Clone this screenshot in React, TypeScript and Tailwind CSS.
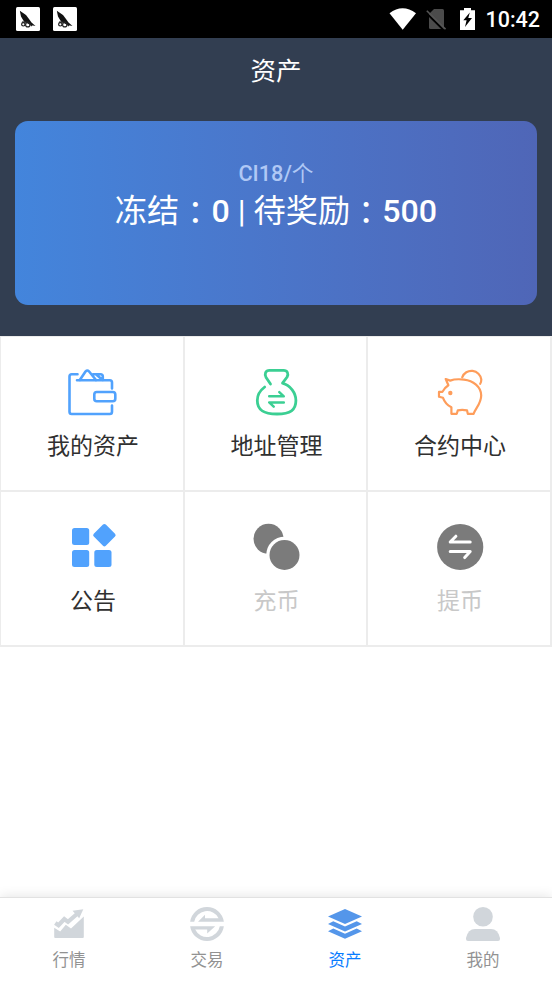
import type { ReactNode } from 'react';
import clsx from 'clsx';

interface Tile {
  label: string;
  icon: ReactNode;
  disabled?: boolean;
}

interface Tab {
  label: string;
  icon: ReactNode;
  active?: boolean;
}

function TileIcon({ children, className }: { children: ReactNode; className: string }) {
  return (
    <svg width="50" height="48" viewBox="0 0 50 48" className={className} strokeLinecap="round" strokeLinejoin="round">
      {children}
    </svg>
  );
}

function TabIcon({ children }: { children: ReactNode }) {
  return (
    <svg width="34" height="34" viewBox="0 0 34 34" fill="currentColor">
      {children}
    </svg>
  );
}

const tiles: Tile[] = [
  {
    label: '我的资产',
    icon: (
      <TileIcon className="fill-none stroke-[#51a2fd] stroke-[2.6]">
        <path d="M9.5 6.3H3.7Q1.5 6.3 1.5 8.5V43.8Q1.5 46 3.7 46H41.8Q44 46 44 43.8V37.5" />
        <path d="M9 12.2H41.8Q44 12.2 44 14.4V20.5" />
        <path d="M11.8 12L17.7 3.3Q19.3 1.6 20.9 3.3L28 12M25 6.3H32.5Q34.8 6.3 34.8 8.5V12M28.5 6.8L34 11.5" />
        <rect x="26.3" y="24" width="21" height="9.3" rx="2.5" />
      </TileIcon>
    ),
  },
  {
    label: '地址管理',
    icon: (
      <TileIcon className="fill-none stroke-[#3bcf93] stroke-[2.8]">
        <path d="M18.5 16L14.1 9.5C12.2 6 13.5 2.4 17.5 2.4H31.5C35.5 2.4 36.8 5.8 35.1 9L30.5 15.2C38.5 17.5 43.9 25 43.9 32.5C43.9 42 38.5 46 25 46C11.5 46 5.3 42 5.3 32.5C5.3 27 8 22.5 12.7 19" />
        <path d="M17.2 28.3H31.8L27.3 24.2M31.8 34.4H17.2L21.7 38.6" strokeWidth="2.5" />
      </TileIcon>
    ),
  },
  {
    label: '合约中心',
    icon: (
      <TileIcon className="fill-none stroke-[#fe9d5b] stroke-[2.2]">
        <path d="M10.7 11L15.2 12.6C19 11.2 24 11 29 11.6C38 12.7 46.2 18.5 46.2 27.5C46.2 35.5 41 39.5 38.6 45.8H32.8L32 42.3Q27 41.5 22.8 42.3L21.8 45.8H16.4V39.2C12.5 37.3 9.5 34 8 29.8L4 28.7V23.9H7.4C8.6 21.2 10.6 19 13.4 17.2Z" />
        <path d="M27.2 9.3A9.9 9.9 0 0 1 46.3 11.5Q46.3 14 45.2 15.8" />
        <circle cx="15.3" cy="25" r="2.2" className="fill-[#fe9d5b] stroke-none" />
      </TileIcon>
    ),
  },
  {
    label: '公告',
    icon: (
      <TileIcon className="fill-[#51a2fd]">
        <rect x="4" y="5" width="17.2" height="17" rx="2.5" />
        <rect x="4" y="27" width="17.2" height="17" rx="2.5" />
        <rect x="26.3" y="27" width="17.2" height="17" rx="2.5" />
        <rect x="27.9" y="3.7" width="17" height="17" rx="2" transform="rotate(45 36.4 12.2)" />
      </TileIcon>
    ),
  },
  {
    label: '充币',
    disabled: true,
    icon: (
      <TileIcon className="fill-[#7b7b7b]">
        <circle cx="16.5" cy="15.8" r="15" />
        <circle cx="32.5" cy="32" r="18.3" className="fill-white" />
        <circle cx="32.5" cy="32" r="15" />
      </TileIcon>
    ),
  },
  {
    label: '提币',
    disabled: true,
    icon: (
      <TileIcon className="fill-none">
        <circle cx="25.2" cy="24" r="23.1" className="fill-[#7b7b7b]" />
        <path d="M35.2 19H15.2L20.9 13.2M15.2 28.5H35.2L29.7 34.6" className="stroke-white stroke-3" />
      </TileIcon>
    ),
  },
];

const tabs: Tab[] = [
  {
    label: '行情',
    icon: (
      <TabIcon>
        <path d="M3.3 16L6.5 18.2L12.3 12L16 14.8L25 7" fill="none" stroke="currentColor" strokeWidth="4.2" />
        <path d="M20.5 3.8L31.3 2.2L27.2 11.2Z" />
        <path d="M2.2 20.8L8.2 24.5L13.8 17.8L19 21.5L31.8 9.5V30Q31.8 31 30.8 31H3.2Q2.2 31 2.2 30Z" />
      </TabIcon>
    ),
  },
  {
    label: '交易',
    icon: (
      <TabIcon>
        <path d="M0.15 14.8A17 17 0 0 1 33.85 14.8H8L15 7.8V11.2H28.6A13 13 0 0 0 4.2 14.8Z" />
        <path d="M33.85 19.2A17 17 0 0 1 0.15 19.2H25.2L17.2 26.4V22.5H5.2A13 13 0 0 0 29.8 19.2Z" />
      </TabIcon>
    ),
  },
  {
    label: '资产',
    active: true,
    icon: (
      <TabIcon>
        <path d="M17 2L34 9.5L17 17L0 9.5Z" />
        <path d="M0 17L5.3 14.3L17 19.5L28.7 14.3L34 17L17 24.5Z" />
        <path d="M0 24.3L5.3 21.6L17 26.8L28.7 21.6L34 24.3L17 31.8Z" />
      </TabIcon>
    ),
  },
  {
    label: '我的',
    icon: (
      <TabIcon>
        <circle cx="17" cy="9.8" r="9.8" />
        <path d="M9 22H25Q32 22 34 31V32Q34 34 32 34H2Q0 34 0 32V31Q2 22 9 22Z" />
      </TabIcon>
    ),
  },
];

function NotificationIcon() {
  return (
    <svg width="24" height="24" viewBox="0 0 24 24">
      <rect width="24" height="24" rx="1.5" fill="#fff" />
      <path d="M3.8 3.8L10 8L13 12L15.5 15.5L19.5 19L14.5 18L8 14.5L5 9.5Z" fill="#111" />
      <g fill="none" stroke="#222" strokeWidth="1.2">
        <circle cx="7.3" cy="17.3" r="1.7" />
        <circle cx="11.8" cy="17.7" r="2.2" />
        <path d="M6 15.2L12 14.8L16 19" />
      </g>
    </svg>
  );
}

function StatusBar() {
  return (
    <div className="h-[38px] bg-black flex items-center pl-[15.5px] pr-3">
      <div className="flex gap-[13px]">
        <NotificationIcon />
        <NotificationIcon />
      </div>
      <div className="ml-auto flex items-center">
        <svg width="28" height="22" viewBox="0 0 28 22" fill="#fff">
          <path d="M0.5 5.2Q13.5 -4.5 27 5.2L13.7 21.8Z" />
        </svg>
        <svg width="20" height="22" viewBox="0 0 20 22" className="ml-[9px]">
          <path d="M8 1H16.5Q18 1 18 2.5V21H4.5Q3 21 3 19.5V6Z" fill="#4b4b4b" />
          <path d="M0.5 5.2L18.5 23" stroke="#000" strokeWidth="2" />
          <path d="M0.8 2.8L19.5 21.2" stroke="#555" strokeWidth="1.6" />
        </svg>
        <svg width="15" height="22" viewBox="0 0 15 22" className="ml-3.5">
          <path d="M4 0H11V2.2H15V22H0V2.2H4Z" fill="#fff" />
          <path d="M9.8 4.5L3.3 12.3H6.6L5 19L12 10H8.3Z" fill="#000" />
        </svg>
        <span className="ml-2.5 pt-0.5 text-[21.5px] leading-none font-medium text-white">10:42</span>
      </div>
    </div>
  );
}

// full-width colon, centred in its em box
function Colon() {
  return <span className="relative top-0.5 font-['Noto_Sans_CJK_TC',sans-serif]" lang="zh-Hant">：</span>;
}

export default function App() {
  return (
    <div className="w-full h-[981px] flex flex-col bg-white overflow-hidden font-[Roboto,'Noto_Sans_CJK_SC',sans-serif]" lang="zh-CN">
      <StatusBar />
      <header className="h-[298px] bg-[#323e51] px-[15px]">
        <h1 className="h-[83px] pb-4 flex items-center justify-center text-[25.5px] leading-none text-white">资产</h1>
        <div className="h-[184px] rounded-[13px] bg-linear-to-r from-[#4385dc] to-[#4f66b7] pt-[37px] text-center">
          <p className="h-8 leading-8 text-[21.7px] text-[#b0c8f5]"><span className="font-medium">CI18/</span>个</p>
          <p className="-mt-0.5 h-10 leading-10 text-[32.2px] text-white whitespace-nowrap">
            冻结<Colon /><span className="font-medium">0</span> | 待奖励<Colon /><span className="font-medium">500</span>
          </p>
        </div>
      </header>
      <main className="grid grid-cols-[184px_183px_1fr] border-l border-t border-[#ececec]">
        {tiles.map(tile => (
          <div key={tile.label} className="h-[155px] pt-[31px] pl-0.5 flex flex-col items-center border-r-2 border-b-2 border-[#ececec]">
            {tile.icon}
            <span className={clsx('mt-[15px] text-[23px] leading-8', tile.disabled ? 'text-[#c8c8c8]' : 'text-[#303030]')}>
              {tile.label}
            </span>
          </div>
        ))}
      </main>
      <nav className="mt-auto h-[84px] grid grid-cols-4 border-t border-[#e2e2e2] bg-white shadow-[0_0_12px_rgba(0,0,0,0.12)]">
        {tabs.map(tab => (
          <div key={tab.label} className={clsx('pt-[9px] flex flex-col items-center', tab.active ? 'text-[#5496ea]' : 'text-[#d1d6db]')}>
            {tab.icon}
            <span className={clsx('mt-2 text-[16.5px] leading-6', tab.active ? 'text-[#087cff]' : 'text-[#929292]')}>{tab.label}</span>
          </div>
        ))}
      </nav>
    </div>
  );
}
